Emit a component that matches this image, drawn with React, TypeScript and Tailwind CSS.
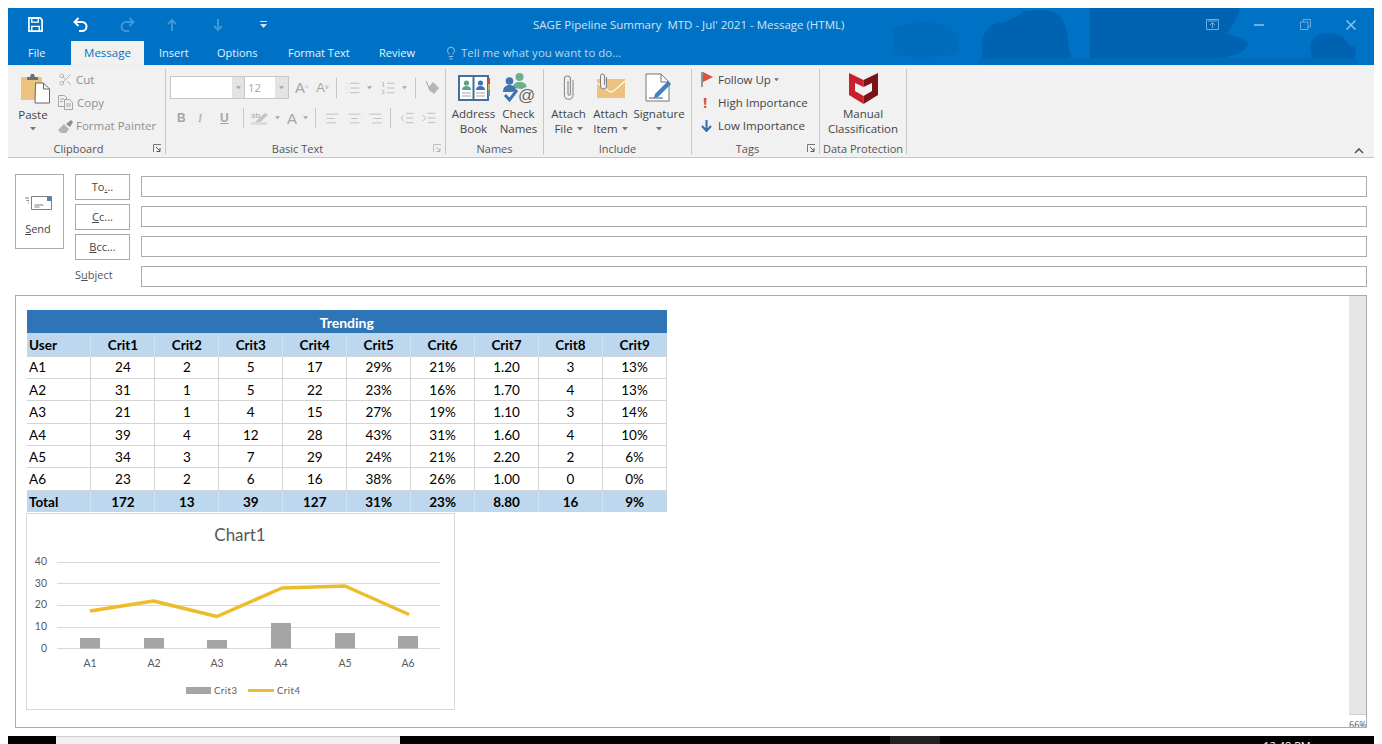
import type { ReactNode } from 'react';
import {
  AlignCenter,
  AlignLeft,
  AlignRight,
  IndentDecrease,
  IndentIncrease,
  Lightbulb,
  List,
  ListOrdered,
  Scissors,
} from 'lucide-react';

const rows = [
  ['A1', '24', '2', '5', '17', '29%', '21%', '1.20', '3', '13%'],
  ['A2', '31', '1', '5', '22', '23%', '16%', '1.70', '4', '13%'],
  ['A3', '21', '1', '4', '15', '27%', '19%', '1.10', '3', '14%'],
  ['A4', '39', '4', '12', '28', '43%', '31%', '1.60', '4', '10%'],
  ['A5', '34', '3', '7', '29', '24%', '21%', '2.20', '2', '6%'],
  ['A6', '23', '2', '6', '16', '38%', '26%', '1.00', '0', '0%'],
];
const heads = ['User', 'Crit1', 'Crit2', 'Crit3', 'Crit4', 'Crit5', 'Crit6', 'Crit7', 'Crit8', 'Crit9'];
const totals = ['Total', '172', '13', '39', '127', '31%', '23%', '8.80', '16', '9%'];

function Caret({ className = '' }: { className?: string }) {
  return (
    <svg width="6" height="4" viewBox="0 0 6 4" className={className}>
      <path d="M0 0h6L3 3.5z" fill="currentColor" />
    </svg>
  );
}

function Launcher({ dim = false }: { dim?: boolean }) {
  return (
    <svg width="9" height="9" viewBox="0 0 9 9" className={`absolute right-[3px] bottom-[1px] ${dim ? 'opacity-40' : ''}`}>
      <path d="M.5 8V.5H8" fill="none" stroke="#777" />
      <path d="M3 3l4 4M7 4v3.5H3.5" fill="none" stroke="#555" />
    </svg>
  );
}

function Group({ width, label, launcher, dim, children }: { width: string; label: string; launcher?: boolean; dim?: boolean; children: ReactNode }) {
  return (
    <div className={`relative flex h-[85px] flex-col border-r border-[#c6c6c6] ${width}`}>
      <div className="h-[72px]">{children}</div>
      <div className={`h-[13px] whitespace-nowrap text-center text-[11px] leading-[15px] text-[#555] ${launcher ? 'pr-[16px]' : ''}`}>{label}</div>
      {launcher && <Launcher dim={dim} />}
    </div>
  );
}

function BigButton({ width, icon, top, bottom, caret }: { width: string; icon: ReactNode; top: string; bottom?: string; caret?: boolean }) {
  return (
    <div className={`flex flex-col items-center text-[11.5px] leading-[15.5px] text-[#444] ${width}`}>
      <div className="flex h-[33px] items-center justify-center">{icon}</div>
      <div className="mt-[2px] whitespace-nowrap">{top}</div>
      <div className="flex h-[15px] items-center gap-1 whitespace-nowrap">
        {bottom}
        {caret && <Caret className="text-[#777]" />}
      </div>
    </div>
  );
}

function AddressBookIcon() {
  return (
    <svg width="32" height="28" viewBox="0 0 32 28">
      <rect x="1" y="2" width="29" height="24" fill="#fff" stroke="#44709e" strokeWidth="2" />
      <path d="M15.5 2v24" stroke="#44709e" strokeWidth="2" />
      <circle cx="8.5" cy="9" r="2.6" fill="#5fa08a" />
      <path d="M4 16c0-3 2-4 4.5-4s4.5 1 4.5 4z" fill="#5fa08a" />
      <circle cx="22.5" cy="9" r="2.6" fill="#3f74b0" />
      <path d="M18 16c0-3 2-4 4.500-4s4.500 1 4.500 4z" fill="#3f74b0" />
      <path d="M4 19h9M4 22h9M18 19h9M18 22h9" stroke="#a9a9a9" />
      <path d="M30 4h2v6h-2z" fill="#c0504d" />
      <path d="M30 10h2v6h-2z" fill="#e3a33b" />
      <path d="M30 16h2v6h-2z" fill="#5fa08a" />
    </svg>
  );
}

function CheckNamesIcon() {
  return (
    <svg width="32" height="32" viewBox="0 0 32 32" className="overflow-visible">
      <circle cx="16.500" cy="5" r="4" fill="#6fae8b" />
      <path d="M10 16c0-5 3-6 6.500-6s7 1 7 5l-5 2z" fill="#6fae8b" />
      <circle cx="6.500" cy="9" r="3.800" fill="#3f74b0" />
      <path d="M0 20c0-5 3-7 6.500-7s6.500 2 6.500 6l-4 1z" fill="#3f74b0" />
      <path d="M2 23l4.500 5L14 18" fill="none" stroke="#3f74b0" strokeWidth="3" />
      <text x="15" y="29" fontSize="17" fontFamily="'Liberation Sans', sans-serif" fill="#666">@</text>
    </svg>
  );
}

function ClipIcon() {
  return (
    <svg width="14" height="29" viewBox="0 0 14 29">
      <path d="M11 7v15a4.300 4.300 0 0 1-8.600 0V6a3 3 0 0 1 6 0v15a1.200 1.200 0 0 1-2.400 0V8" fill="none" stroke="#8a8a8a" strokeWidth="1.100" />
    </svg>
  );
}

function AttachItemIcon() {
  return (
    <svg width="30" height="30" viewBox="0 0 30 30">
      <path d="M1 6h28v19H1z" fill="#ecc27e" />
      <path d="M1 10c8 4 11 9 14 9s7-5 14-11" fill="none" stroke="#fff" strokeWidth="1.200" />
      <path d="M10.500 4v9a3 3 0 0 1-6 0V3a2 2 0 0 1 4 0v9" fill="#f1f1f1" stroke="#808080" />
    </svg>
  );
}

function SignatureIcon() {
  return (
    <svg width="28" height="30" viewBox="0 0 28 30">
      <path d="M1 1h15l8 8v19H1z" fill="#fff" stroke="#777" />
      <path d="M16 1v8h8" fill="none" stroke="#777" />
      <path d="M10 21L23 8l3 3-13 13-4 1z" fill="#3f7fc4" />
      <path d="M4 25h14" stroke="#555" />
    </svg>
  );
}

function ShieldLogo() {
  return (
    <svg width="29" height="33" viewBox="0 0 29 33">
      <path d="M0 2l14.500 7v7L6 12v8l8.500 5v8L0 24z" fill="#c8202d" />
      <path d="M29 2L14.500 9v7l8.500-4v8l-8.500 5v8L29 24z" fill="#7a1418" />
    </svg>
  );
}

function PasteIcon() {
  return (
    <svg width="30" height="31" viewBox="0 0 30 31" className="ml-[8px] self-start">
      <rect x="0" y="4" width="21" height="23" rx="1" fill="#ebc37e" />
      <path d="M6 4h3l1-3h3l1 3h3v3H6z" fill="#6f6f6f" />
      <path d="M14.500 10h8l6 6v14h-14.500z" fill="#fff" stroke="#666" />
      <path d="M22.500 10v6h6" fill="none" stroke="#666" />
    </svg>
  );
}

function CopyIcon() {
  return (
    <svg width="16" height="15" viewBox="0 0 16 15" fill="none" stroke="#a6a6a6">
      <path d="M.5.500h6l2 2v9h-8z" />
      <path d="M6.500 4.500h5l3 3v7h-8z" fill="#f1f1f1" />
      <path d="M2 4h4M2 6.500h3M8 9h5M8 11h5" />
    </svg>
  );
}

function BrushIcon() {
  return (
    <svg width="17" height="14" viewBox="0 0 17 14">
      <path d="M0 11l6-6 5 5-3 4H3z" fill="#b3b3b3" />
      <path d="M8 5l5-4 2 2-3 5z" fill="#8f8f8f" />
    </svg>
  );
}

function Ribbon() {
  return (
    <div className="flex h-[93px] shrink-0 border-b border-[#c6c6c6] bg-[#f1f1f1] pt-1 shadow-[inset_0_1px_0_#d8f0fb]">
      <Group width="w-[158px]" label="Clipboard" launcher>
        <div className="flex pl-[5px]">
          <div className="flex w-[40px] flex-col items-center pt-[4px] text-[11.5px] text-[#444]">
            <PasteIcon />
            <div className="mt-[3px] leading-[15px]">Paste</div>
            <Caret className="mt-[5px] text-[#777]" />
          </div>
          <div className="-mt-px ml-[5px] flex flex-col text-[11.5px] leading-[23px] text-[#8f8f8f]">
            <div className="flex h-[23px] items-center gap-[3px]">
              <Scissors size={15} strokeWidth={1.2} color="#a6a6a6" />
              <span>Cut</span>
            </div>
            <div className="flex h-[23px] items-center gap-[3px]">
              <CopyIcon />
              <span>Copy</span>
            </div>
            <div className="flex h-[23px] items-center gap-[1px]">
              <BrushIcon />
              <span>Format Painter</span>
            </div>
          </div>
        </div>
      </Group>
      <Group width="w-[280px]" label="Basic Text" launcher dim>
        <div className="flex h-[30px] items-center pt-[7px] pl-1 text-[#a6a6a6]">
          <div className="flex h-[23px] w-[119px] border border-[#c6c6c6] bg-white">
            <div className="w-[61px]" />
            <div className="flex w-[12px] items-center justify-center bg-[#e3e3e3]"><Caret className="w-[5px]" /></div>
            <div className="w-px bg-[#c6c6c6]" />
            <div className="w-[30px] pl-[3px] text-[11.5px] leading-[21px]">12</div>
            <div className="flex flex-1 items-center justify-center bg-[#e3e3e3]"><Caret className="w-[5px]" /></div>
          </div>
          <span className="ml-[6px] font-['Liberation_Sans',sans-serif] text-[15px] leading-none">A<sup className="text-[7px]">^</sup></span>
          <span className="ml-[8px] font-['Liberation_Sans',sans-serif] text-[13px] leading-none">A<sup className="text-[7px]">v</sup></span>
          <div className="ml-[8px] h-[20px] w-px bg-[#c6c6c6]" />
          <List size={16} strokeWidth={1} className="ml-[8px]" />
          <Caret className="ml-[6px] w-[5px]" />
          <ListOrdered size={16} strokeWidth={1} className="ml-[8px]" />
          <Caret className="ml-[6px] w-[5px]" />
          <div className="ml-[8px] h-[20px] w-px bg-[#c6c6c6]" />
          <svg width="16" height="16" viewBox="0 0 16 16" className="ml-[8px]">
            <path d="M9 2l6 6-5 6-6-6z" fill="#b5b5b5" />
            <path d="M2 1l5 11" stroke="#a6a6a6" />
          </svg>
        </div>
        <div className="mt-[8px] flex h-[22px] items-center pl-[11px] text-[#a6a6a6]">
          <span className="w-[21px] font-['Liberation_Sans',sans-serif] text-[12px] font-bold">B</span>
          <span className="w-[22px] font-['Liberation_Serif',serif] text-[12px] italic">I</span>
          <span className="w-[17px] font-['Liberation_Sans',sans-serif] text-[12px] font-bold underline">U</span>
          <div className="ml-[6px] h-[20px] w-px bg-[#c6c6c6]" />
          <svg width="20" height="14" viewBox="0 0 20 14" className="ml-[7px] overflow-visible">
            <path d="M3 12L14 2l3 2L7 13z" fill="#c4c4c4" />
            <rect x="0" y="11" width="16" height="3" fill="#dcdcdc" />
            <text x="0" y="7" fontSize="8" fontFamily="'Open Sans', sans-serif" fill="#a6a6a6">ab</text>
          </svg>
          <Caret className="ml-[4px] w-[5px]" />
          <span className="ml-[7px] font-['Liberation_Sans',sans-serif] text-[15px] leading-none">A</span>
          <Caret className="ml-[6px] w-[5px]" />
          <div className="ml-[7px] h-[20px] w-px bg-[#c6c6c6]" />
          <AlignLeft size={15} strokeWidth={1} className="ml-[9px]" />
          <AlignCenter size={15} strokeWidth={1} className="ml-[7px]" />
          <AlignRight size={15} strokeWidth={1} className="ml-[6px]" />
          <div className="ml-[7px] h-[20px] w-px bg-[#c6c6c6]" />
          <IndentDecrease size={16} strokeWidth={1} className="ml-[8px]" />
          <IndentIncrease size={16} strokeWidth={1} className="ml-[6px]" />
        </div>
      </Group>
      <Group width="w-[98px]" label="Names">
        <div className="flex pt-[2px] pl-[5px]">
          <BigButton width="w-[45px]" icon={<AddressBookIcon />} top="Address" bottom="Book" />
          <BigButton width="w-[45px]" icon={<CheckNamesIcon />} top="Check" bottom="Names" />
        </div>
      </Group>
      <Group width="w-[148px]" label="Include">
        <div className="flex pt-[2px] pl-[4px]">
          <BigButton width="w-[41px]" icon={<ClipIcon />} top="Attach" bottom="File" caret />
          <BigButton width="w-[43px]" icon={<AttachItemIcon />} top="Attach" bottom="Item" caret />
          <BigButton width="w-[54px]" icon={<SignatureIcon />} top="Signature" caret />
        </div>
      </Group>
      <Group width="w-[128px]" label="Tags" launcher>
        <div className="-mt-px flex flex-col pl-[9px] text-[11.5px] text-[#444]">
          <div className="flex h-[23px] items-center">
            <svg width="13" height="15" viewBox="0 0 13 15" className="mr-[4px]">
              <path d="M1 0v15" stroke="#777" strokeWidth="1.500" />
              <path d="M2 0l10 5-10 5z" fill="#d8533f" />
            </svg>
            Follow Up
            <Caret className="ml-[3px] w-[5px] text-[#777]" />
          </div>
          <div className="flex h-[23px] items-center">
            <span className="w-[17px] pl-[2px] text-[15px] font-bold text-[#d8533f]">!</span>
            High Importance
          </div>
          <div className="flex h-[23px] items-center">
            <svg width="11" height="12" viewBox="0 0 11 12" className="mr-[6px]">
              <path d="M5.500 0v10M1 6l4.500 5L10 6" fill="none" stroke="#2f6fb5" strokeWidth="2" />
            </svg>
            Low Importance
          </div>
        </div>
      </Group>
      <Group width="w-[87px]" label="Data Protection">
        <div className="pt-[2px]">
          <BigButton width="w-full" icon={<ShieldLogo />} top="Manual" bottom="Classification" />
        </div>
      </Group>
      <div className="flex flex-1 items-end justify-end pr-[10px] pb-[3px]">
        <svg width="10" height="6" viewBox="0 0 10 6">
          <path d="M1 5l4-4 4 4" fill="none" stroke="#555" strokeWidth="1.600" />
        </svg>
      </div>
    </div>
  );
}

function TitleBar() {
  return (
    <div className="relative h-[57px] shrink-0 overflow-hidden bg-[#0072c6] text-white">
      {/* office theme clouds */}
      <svg width="1366" height="57" viewBox="0 0 1366 57" className="absolute top-0 left-0">
        <path d="M885 20c18-8 52-8 62 4 6 8 4 16 2 22-20 4-50 4-64 0z" fill="#006cbc" />
        <path d="M974 42C972 28 980 15 992 15C1000 14 1006 10 1015 4C1030 0 1050 0 1056 14C1060 24 1060 34 1061 42C1064 46 1064 50 1060 50H974Z" fill="#0063b1" />
        <path d="M1082 0H1232C1230 10 1222 22 1218 26C1228 28 1240 32 1240 36C1238 44 1225 49 1210 50H1082Z" fill="#0063b1" />
        <path d="M1302 38c2-18 34-16 38-2 8 2 10 8 6 14h-42z" fill="#0063b1" />
        <path d="M970 50h380v7H970z" fill="#006abb" />
      </svg>
      <div className="relative flex h-[33px] items-center">
        <svg width="15" height="15" viewBox="0 0 16 16" className="ml-[20px]">
          <path d="M1 1h12l2 2v12H1z" fill="none" stroke="#fff" strokeWidth="1.800" />
          <path d="M4 1.500h7v4H4zM4 15v-5h8v5" fill="none" stroke="#fff" strokeWidth="1.500" />
        </svg>
        <svg width="16" height="16" viewBox="0 0 16 16" className="ml-[30px]">
          <path d="M5.500 1L1.500 5l4 4" fill="none" stroke="#fff" strokeWidth="2" />
          <path d="M2 5h7a4.500 4.500 0 0 1 0 9H6" fill="none" stroke="#fff" strokeWidth="2" />
        </svg>
        <svg width="16" height="16" viewBox="0 0 16 16" className="ml-[30px]">
          <path d="M10.500 1l4 4-4 4" fill="none" stroke="#3f97d9" strokeWidth="2" />
          <path d="M14 5H7a4.500 4.500 0 0 0 0 9h3" fill="none" stroke="#3f97d9" strokeWidth="2" />
        </svg>
        <svg width="10" height="12" viewBox="0 0 10 12" className="ml-[32px]">
          <path d="M5 12V1M1 5l4-4 4 4" fill="none" stroke="#3f97d9" strokeWidth="2" />
        </svg>
        <svg width="10" height="12" viewBox="0 0 10 12" className="ml-[36px]">
          <path d="M5 0v11M1 7l4 4 4-4" fill="none" stroke="#3f97d9" strokeWidth="2" />
        </svg>
        <svg width="7" height="7" viewBox="0 0 7 7" className="ml-[37px]">
          <path d="M0 .500h7" stroke="#cfe6f7" />
          <path d="M0 3h7L3.500 7z" fill="#cfe6f7" />
        </svg>
        <div className="absolute left-[525px] whitespace-pre text-[11.5px] text-[#cfe3f5]">SAGE Pipeline Summary  MTD - Jul' 2021 - Message (HTML)</div>
        <div className="absolute left-[1198px] flex items-center">
          <svg width="13" height="11" viewBox="0 0 13 11" fill="none" stroke="#6aaee4">
            <path d="M.500.500h12v10H.500zM2 2h9M6.500 9V4M4 6l2.500-2.500L9 6" />
          </svg>
          <svg width="10" height="2" viewBox="0 0 10 2" className="ml-[35px]">
            <path d="M0 1h10" stroke="#6aaee4" strokeWidth="2" />
          </svg>
          <svg width="11" height="11" viewBox="0 0 11 11" fill="none" stroke="#6aaee4" className="ml-[36px]">
            <path d="M3 3V.500h7.500V8H8M.500 3h7.500v7.500H.500z" />
          </svg>
          <svg width="10" height="10" viewBox="0 0 10 10" className="ml-[35px]">
            <path d="M.500.500l9 9M9.500.500l-9 9" stroke="#8cc2ec" strokeWidth="1.500" />
          </svg>
        </div>
      </div>
      <div className="relative flex h-[24px] items-center text-[11px] text-[#e6f2fb]">
        <span className="ml-[20px] w-[19px]">File</span>
        <div className="ml-[24px] flex h-full w-[73px] items-center justify-center bg-[#f1f1f1] text-[11.5px] text-[#0072c6]">Message</div>
        <span className="ml-[15px] w-[29px]">Insert</span>
        <span className="ml-[29px] w-[42px]">Options</span>
        <span className="ml-[29px] w-[62px]">Format Text</span>
        <span className="ml-[29px] w-[37px]">Review</span>
        <Lightbulb size={14} strokeWidth={1.300} className="ml-[28px] text-[#bcdcf5]" />
        <span className="ml-[3px] text-[11.5px] text-[#b4d8f5]">Tell me what you want to do...</span>
      </div>
    </div>
  );
}

function AddressRow({ label }: { label: ReactNode }) {
  return (
    <div className="flex h-[26px]">
      <div className="flex h-[26px] w-[55px] items-center justify-center border border-[#ababab] text-[11px] text-[#444]">{label}</div>
      <div className="mt-[2px] ml-[11px] h-[21px] flex-1 border border-[#ababab]" />
    </div>
  );
}

function Compose() {
  return (
    <div className="flex px-[7px] pt-4">
      <div className="flex h-[75px] w-[49px] shrink-0 flex-col items-center border border-[#ababab] pt-[21px] pr-[3px] text-[11px] text-[#444]">
        <svg width="27" height="14" viewBox="0 0 27 14" fill="none">
          <path d="M6.500.500h20v13h-20z" stroke="#7f7f7f" />
          <rect x="22" y="1" width="4" height="4" fill="#4f81bd" />
          <path d="M9.500 9h9M9.500 11h5M0 2h4M1.500 4.500h2.500M3 7h1" stroke="#7f7f7f" />
        </svg>
        <div className="mt-[12px] leading-[14px]"><u>S</u>end</div>
      </div>
      <div className="ml-[11px] flex flex-1 flex-col gap-[4px]">
        <AddressRow label={<>To<u>.</u>..</>} />
        <AddressRow label={<><u>C</u>c...</>} />
        <AddressRow label={<><u>B</u>cc...</>} />
        <div className="flex h-[24px]">
          <div className="w-[55px] text-[11px] leading-[22px] text-[#555]">S<u>u</u>bject</div>
          <div className="mt-[2px] ml-[11px] h-[21px] flex-1 border border-[#ababab]" />
        </div>
      </div>
    </div>
  );
}

function Chart() {
  const bars = [
    { name: 'A1', x: 53, top: 124 },
    { name: 'A2', x: 117, top: 124 },
    { name: 'A3', x: 180, top: 126 },
    { name: 'A4', x: 244, top: 109 },
    { name: 'A5', x: 308, top: 119 },
    { name: 'A6', x: 371, top: 122 },
  ];
  return (
    <div className="-ml-px h-[197px] w-[429px] border border-[#d9d9d9] bg-white">
      <svg width="427" height="195" viewBox="0 0 427 195" fontFamily="Lato, sans-serif">
        <text x="213" y="27" textAnchor="middle" fontSize="17" fill="#595959">Chart1</text>
        {[48.5, 69.5, 91.5, 113.5, 134.5].map((y) => (
          <path key={y} d={`M30 ${y}H413`} stroke="#d9d9d9" />
        ))}
        {['40', '30', '20', '10', '0'].map((t, i) => (
          <text key={t} x="20" y={[51, 73, 94, 116, 138][i]} textAnchor="end" fontSize="10.500" fill="#595959">{t}</text>
        ))}
        {bars.map((b) => (
          <g key={b.name}>
            <rect x={b.x} y={b.top} width="20" height={134.5 - b.top} fill="#a5a5a5" />
            <text x={b.x + 10} y="153" textAnchor="middle" fontSize="10.500" fill="#595959">{b.name}</text>
          </g>
        ))}
        <polyline points="63,97 126.500,87 190,102.500 255,74 318,72 382,100.500" fill="none" stroke="#ecbc2a" strokeWidth="3.500" strokeLinejoin="round" />
        <rect x="159" y="173" width="25" height="7" fill="#a5a5a5" />
        <text x="187" y="180" fontSize="9.500" letterSpacing="0.500" fill="#595959">Crit3</text>
        <path d="M221 176.500h26" stroke="#ecbc2a" strokeWidth="3" />
        <text x="250" y="180" fontSize="9.500" letterSpacing="0.500" fill="#595959">Crit4</text>
      </svg>
    </div>
  );
}

function Trending() {
  return (
    <table className="w-[640px] table-fixed border-collapse font-['Lato',sans-serif] text-[13.500px] leading-none text-black">
      <tbody>
        <tr className="h-[23px] bg-[#2e75b6]">
          <td colSpan={10} className="p-0 pt-[2px] text-center text-[14px] font-bold text-white">Trending</td>
        </tr>
        <tr className="h-[23px] bg-[#bdd7ee] font-bold">
          {heads.map((h, i) => (
            <td key={h} className={`border-l border-[#cfe2f3] p-0 pt-[2px] first:border-l-0 ${i === 0 ? 'pl-[2px]' : 'text-center'}`}>{h}</td>
          ))}
        </tr>
        {rows.map((r) => (
          <tr key={r[0]} className="h-[22.400px]">
            {r.map((c, i) => (
              <td key={i} className={`border border-[#d4d4d4] p-0 pt-[2px] first:border-l-0 ${i === 0 ? 'pl-[2px]' : 'text-center'}`}>{c}</td>
            ))}
          </tr>
        ))}
        <tr className="h-[22px] bg-[#bdd7ee] font-bold">
          {totals.map((c, i) => (
            <td key={c} className={`border-l border-[#cfe2f3] p-0 pt-[2px] first:border-l-0 ${i === 0 ? 'pl-[2px]' : 'text-center'}`}>{c}</td>
          ))}
        </tr>
      </tbody>
    </table>
  );
}

function Body() {
  return (
    <div className="mx-[7px] mt-[7px] flex h-[433px] border border-[#ababab]">
      <div className="flex-1 pt-[14px] pl-[11px]">
        <Trending />
        <div className="mt-px"><Chart /></div>
      </div>
      <div className="flex w-[17px] flex-col bg-[#e6e6e6]">
        <div className="flex-1 border-b border-[#cfcfcf]" />
        <div className="h-[12px] overflow-hidden bg-white pt-[4px] text-right text-[9px] leading-[12px] text-[#555]">66%</div>
      </div>
    </div>
  );
}

function Taskbar() {
  return (
    <div className="mt-2 flex h-2 shrink-0 overflow-hidden bg-black">
      <div className="ml-[48px] w-[344px] border-t border-[#cfcfcf] bg-[#f0f0f0]" />
      <div className="ml-[490px] w-[50px] bg-[#222]" />
      <div className="ml-[322px] w-[50px] pt-[4px] text-center text-[11px] leading-[12px] text-white">12:48 PM</div>
    </div>
  );
}

export default function App() {
  return (
    <div className="h-[744px] w-[1382px] overflow-hidden bg-white font-['Open_Sans',sans-serif]">
      <div className="flex h-full flex-col px-2 pt-2">
        <TitleBar />
        <Ribbon />
        <Compose />
        <Body />
        <Taskbar />
      </div>
    </div>
  );
}
